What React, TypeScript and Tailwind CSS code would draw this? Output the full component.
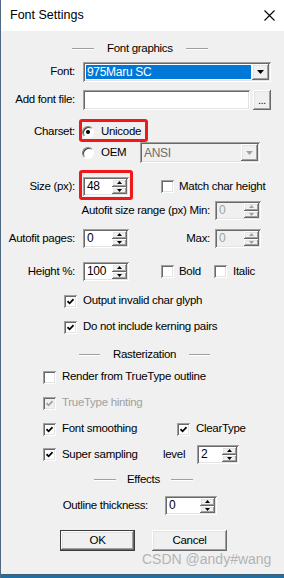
import type { ReactNode } from 'react';

// Classic Win32 3D edges, drawn with inset shadows.
const sunken =
  'shadow-[inset_1px_1px_0_#a0a0a0,inset_-1px_-1px_0_#ffffff,inset_2px_2px_0_#696969,inset_-2px_-2px_0_#e3e3e3]';
const raised =
  'shadow-[inset_-1px_-1px_0_#696969,inset_1px_1px_0_#ffffff,inset_-2px_-2px_0_#a0a0a0,inset_2px_2px_0_#e3e3e3]';

function Arrow({ dir, color = '#000', size = 'small' }: { dir: 'up' | 'down'; color?: string; size?: 'small' | 'big' }) {
  if (size === 'big') {
    return (
      <svg width="7" height="4" viewBox="0 0 7 4">
        <polygon points="0,0 7,0 3.5,4" fill={color} />
      </svg>
    );
  }
  return (
    <svg width="5" height="3" viewBox="0 0 5 3">
      {dir === 'up' ? <polygon points="2.5,0 5,3 0,3" fill={color} /> : <polygon points="0,0 5,0 2.5,3" fill={color} />}
    </svg>
  );
}

function Spin({ value, w, disabled }: { value: string; w: string; disabled?: boolean }) {
  const arrow = disabled ? '#a0a0a0' : '#000';
  return (
    <div className={`flex h-[19px] ${w} p-[2px] ${sunken} ${disabled ? 'bg-[#f0f0f0]' : 'bg-white'}`}>
      <div className={`flex-1 pl-[2px] text-[12px] leading-[15px] ${disabled ? 'text-[#a0a0a0]' : ''}`}>{value}</div>
      <div className="flex w-[15px] flex-col">
        <div className={`flex flex-1 items-center justify-center bg-[#f0f0f0] ${raised}`}>
          <Arrow dir="up" color={arrow} />
        </div>
        <div className={`flex flex-1 items-center justify-center bg-[#f0f0f0] ${raised}`}>
          <Arrow dir="down" color={arrow} />
        </div>
      </div>
    </div>
  );
}

function Check({ checked, disabled }: { checked?: boolean; disabled?: boolean }) {
  return (
    <div
      className={`flex h-[13px] w-[13px] shrink-0 items-center justify-center ${sunken} ${
        disabled ? 'bg-[#f0f0f0]' : 'bg-white'
      }`}
    >
      {checked && (
        <svg width="7" height="7" viewBox="0 0 7 7">
          <path d="M0.5 3.2 L2.6 5.3 L6.5 1.2" fill="none" stroke={disabled ? '#a0a0a0' : '#000'} strokeWidth="1.7" />
        </svg>
      )}
    </div>
  );
}

function Radio({ checked }: { checked?: boolean }) {
  return (
    <div className="flex h-[12px] w-[12px] shrink-0 items-center justify-center rounded-full border border-t-[#808080] border-l-[#808080] border-r-[#ffffff] border-b-[#ffffff] bg-white shadow-[inset_1px_1px_0_#404040]">
      {checked && <div className="h-[4px] w-[4px] rounded-full bg-black" />}
    </div>
  );
}

function Header({ children, left, line, gap }: { children: ReactNode; left: string; line: string; gap: string }) {
  return (
    <div className={`flex h-[16px] items-center ${left}`}>
      <div className={`h-[2px] ${line} border-t border-t-[#a0a0a0] border-b border-b-white`} />
      <span className={gap}>{children}</span>
      <div className={`h-[2px] ${line} border-t border-t-[#a0a0a0] border-b border-b-white`} />
    </div>
  );
}

function Label({ children }: { children: ReactNode }) {
  return <div className="w-[74px] shrink-0 text-right">{children}</div>;
}

function RedMark({ className }: { className: string }) {
  return <span className={`pointer-events-none absolute rounded-[3px] border-[3px] border-[#f01818] ${className}`} />;
}

export default function App() {
  return (
    <div
      className="flex h-[578px] w-[284px] flex-col overflow-hidden whitespace-nowrap border-l border-l-[#4e6a82] bg-[#f0f0f0] text-[11.5px] leading-none tracking-[-0.3px] text-black"
      style={{ fontFamily: '"Liberation Sans", Arial, sans-serif' }}
    >
      {/* title bar */}
      <div className="flex h-[31px] shrink-0 items-center justify-between bg-white pl-[9px] pr-[9px]">
        <span className="text-[12.5px] tracking-normal">Font Settings</span>
        <svg width="11" height="11" viewBox="0 0 11 11">
          <path d="M0.5 0.5 L10.5 10.5 M10.5 0.5 L0.5 10.5" stroke="#000" strokeWidth="1.1" />
        </svg>
      </div>

      <div className="relative flex flex-1 flex-col">
        <div className="mt-[10px]">
          <Header left="pl-[71px]" line="w-[22px]" gap="px-[13px]">
            Font graphics
          </Header>
        </div>

        {/* Font */}
        <div className="mt-[5px] flex h-[20px] items-center">
          <Label>Font:</Label>
          <div className={`ml-[8px] flex h-[20px] w-[188px] p-[2px] ${sunken} bg-white`}>
            <div className="m-[1px] flex flex-1 items-center bg-[#0078d7] pl-[1px] text-[12px] text-white">975Maru SC</div>
            <div className={`flex w-[17px] items-center justify-center bg-[#f0f0f0] ${raised}`}>
              <Arrow dir="down" size="big" />
            </div>
          </div>
        </div>

        {/* Add font file */}
        <div className="mt-[8px] flex h-[20px] items-center">
          <Label>Add font file:</Label>
          <div className={`ml-[8px] h-[20px] w-[167px] bg-white ${sunken}`} />
          <div className={`ml-[3px] flex h-[20px] w-[18px] items-end justify-center bg-[#f0f0f0] pb-[4px] text-[10px] ${raised}`}>
            ...
          </div>
        </div>

        {/* Charset */}
        <div className="mt-[12px] flex h-[20px] items-center">
          <Label>Charset:</Label>
          <div className="relative ml-[7px] flex items-center">
            <RedMark className="-top-[7px] -bottom-[4px] -left-[3px] -right-[7px]" />
            <Radio checked />
            <span className="ml-[7px]">Unicode</span>
          </div>
        </div>
        <div className="flex h-[21px] items-center">
          <div className="ml-[81px] flex w-[58px] shrink-0 items-center">
            <Radio />
            <span className="ml-[7px]">OEM</span>
          </div>
          <div className={`flex h-[21px] w-[120px] p-[2px] ${sunken} bg-[#f0f0f0]`}>
            <div className="flex flex-1 items-center pl-[2px] text-[12px] text-[#6d6d6d]">ANSI</div>
            <div className={`flex w-[17px] items-center justify-center bg-[#f0f0f0] ${raised}`}>
              <Arrow dir="down" size="big" color="#a0a0a0" />
            </div>
          </div>
        </div>

        {/* Size */}
        <div className="mt-[14px] flex h-[19px] items-center">
          <Label>Size (px):</Label>
          <div className="relative ml-[8px]">
            <RedMark className="-top-[7px] -bottom-[4px] -left-[4px] -right-[4px]" />
            <Spin value="48" w="w-[46px]" />
          </div>
          <div className="ml-[32px]">
            <Check />
          </div>
          <span className="ml-[5px]">Match char height</span>
        </div>

        {/* Autofit range min */}
        <div className="mt-[5px] flex h-[19px] items-center">
          <div className="w-[209px] shrink-0 text-right">Autofit size range (px) Min:</div>
          <div className="ml-[5px]">
            <Spin value="0" w="w-[46px]" disabled />
          </div>
        </div>

        {/* Autofit pages / max */}
        <div className="mt-[9px] flex h-[19px] items-center">
          <Label>Autofit pages:</Label>
          <div className="ml-[8px]">
            <Spin value="0" w="w-[46px]" />
          </div>
          <div className="w-[81px] shrink-0 text-right">Max:</div>
          <div className="ml-[5px]">
            <Spin value="0" w="w-[46px]" disabled />
          </div>
        </div>

        {/* Height */}
        <div className="mt-[14px] flex h-[19px] items-center">
          <Label>Height %:</Label>
          <div className="ml-[8px]">
            <Spin value="100" w="w-[46px]" />
          </div>
          <div className="ml-[32px]">
            <Check />
          </div>
          <span className="ml-[5px] w-[35px]">Bold</span>
          <Check />
          <span className="ml-[6px]">Italic</span>
        </div>

        <div className="mt-[11px] flex h-[18px] items-center pl-[63px]">
          <Check checked />
          <span className="ml-[6px]">Output invalid char glyph</span>
        </div>
        <div className="mt-[8px] flex h-[18px] items-center pl-[63px]">
          <Check checked />
          <span className="ml-[6px]">Do not include kerning pairs</span>
        </div>

        <div className="mt-[11px]">
          <Header left="pl-[78px]" line="w-[21px]" gap="px-[13px]">
            Rasterization
          </Header>
        </div>

        <div className="mt-[5px] flex h-[18px] items-center pl-[42px]">
          <Check />
          <span className="ml-[6px]">Render from TrueType outline</span>
        </div>
        <div className="mt-[8px] flex h-[18px] items-center pl-[42px]">
          <Check checked disabled />
          <span className="ml-[6px] text-[#a0a0a0]">TrueType hinting</span>
        </div>
        <div className="mt-[8px] flex h-[18px] items-center pl-[42px]">
          <div className="flex w-[134px] shrink-0 items-center">
            <Check checked />
            <span className="ml-[6px]">Font smoothing</span>
          </div>
          <Check checked />
          <span className="ml-[6px]">ClearType</span>
        </div>
        <div className="mt-[7px] flex h-[19px] items-center pl-[42px]">
          <div className="flex w-[120px] shrink-0 items-center">
            <Check checked />
            <span className="ml-[6px]">Super sampling</span>
          </div>
          <span className="w-[34px] shrink-0">level</span>
          <Spin value="2" w="w-[42px]" />
        </div>

        <div className="mt-[8px]">
          <Header left="pl-[93px]" line="w-[22px]" gap="px-[11px]">
            Effects
          </Header>
        </div>

        <div className="mt-[8px] flex h-[19px] items-center">
          <div className="w-[147px] shrink-0 text-right">Outline thickness:</div>
          <div className="ml-[17px]">
            <Spin value="0" w="w-[52px]" />
          </div>
        </div>

        <div className="mt-[15px] flex h-[21px] items-center pl-[59px]">
          <div className="h-[21px] w-[75px] border border-[#3c3c3c]">
            <div className={`flex h-full w-full items-center justify-center bg-[#f0f0f0] ${raised}`}>OK</div>
          </div>
          <div className={`ml-[17px] flex h-[21px] w-[75px] items-center justify-center bg-[#f0f0f0] ${raised}`}>
            Cancel
          </div>
        </div>

        {/* watermark */}
        <span className="pointer-events-none absolute left-[141px] top-[521px] text-[14px] tracking-normal text-[#b4b4b4]">
          CSDN @andy#wang
        </span>
      </div>

      <div className="h-[4px] shrink-0 border-t border-t-[#3d5f78] bg-[#1f6fa5]" />
    </div>
  );
}
